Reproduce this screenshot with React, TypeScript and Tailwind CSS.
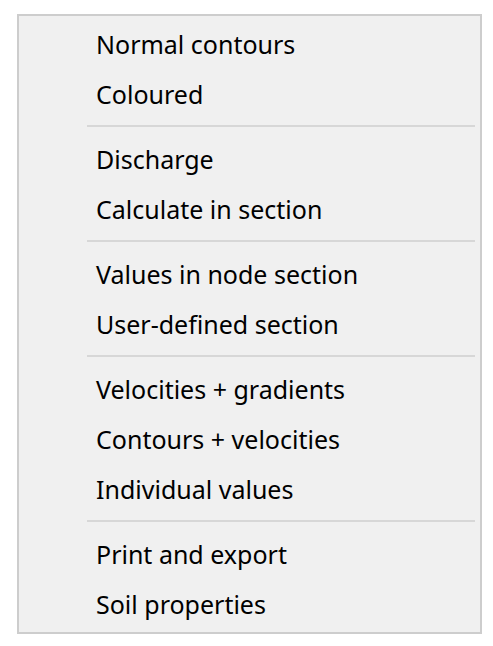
const groups: string[][] = [
  ['Normal contours', 'Coloured'],
  ['Discharge', 'Calculate in section'],
  ['Values in node section', 'User-defined section'],
  ['Velocities + gradients', 'Contours + velocities', 'Individual values'],
  ['Print and export', 'Soil properties'],
];

const MenuItem = ({label}: {label: string}) => (
  <div className="flex h-[50px] items-center pl-[77px] text-[25px] leading-none text-black">{label}</div>
);

const Separator = () => (
  <div className="flex h-[15px] flex-col pt-[6px] pl-[68px] pr-[5px]">
    <div className="h-[2px] w-full bg-[#d7d7d7]" />
  </div>
);

const App = () => {
  return (
    <div className="h-[646px] w-[493px] bg-white pt-[14px] pl-[17px]" style={{fontFamily: '"Noto Sans", "Open Sans", sans-serif'}}>
      <div className="flex w-[465px] flex-col border-2 border-[#cdcdcd] bg-[#f0f0f0] py-[3px]">
        {groups.map((items, i) => (
          <div key={i} className="flex flex-col">
            {i > 0 && <Separator />}
            {items.map((label) => (
              <MenuItem key={label} label={label} />
            ))}
          </div>
        ))}
      </div>
    </div>
  );
};

export default App;
